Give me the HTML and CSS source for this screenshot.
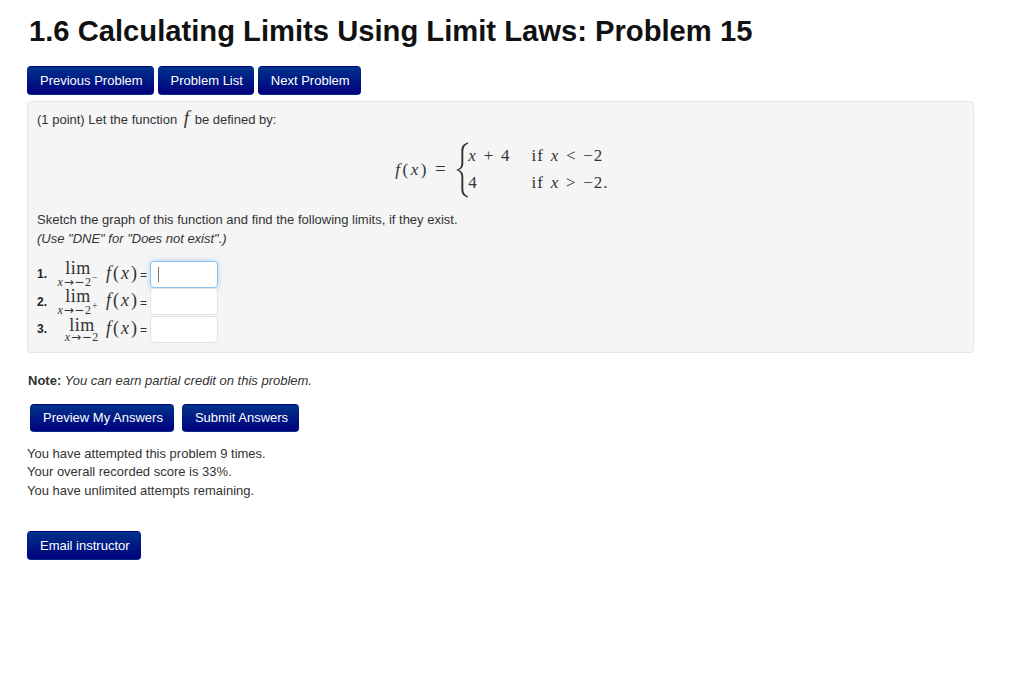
FILE: index.html
```html
<!DOCTYPE html>
<html lang="en">
<head>
<meta charset="utf-8">
<title>Problem 15</title>
<link rel="stylesheet" href="styles.css">
</head>
<body>
<h1 class="title">1.6 Calculating Limits Using Limit Laws: Problem 15</h1>
<nav class="nav">
  <a class="btn">Previous Problem</a>
  <a class="btn">Problem List</a>
  <a class="btn">Next Problem</a>
</nav>
<section class="well">
  <p class="intro">(1 point) Let the function <i class="m big">f</i> be defined by:</p>
  <div class="display">
    <span class="m eq-lhs"><i>f</i>(<i>x</i>)<span class="rel">=</span></span>
    <svg class="brace" width="12" height="56" viewBox="2 0 12.5 54" preserveAspectRatio="none"><path d="M14.5 0.6C9.5 1.6 7.6 4.5 7.6 8.5V20.5C7.6 23.5 6 26 2 27C6 28 7.6 30.5 7.6 33.5V45.5C7.6 49.5 9.5 52.4 14.5 53.4V52.4C11.5 51.4 9.6 49 9.6 45.5V33.5C9.6 30 8 28 5 27C8 26 9.6 24 9.6 20.5V8.5C9.6 5 11.5 2.6 14.5 1.6Z" fill="#333"/></svg>
    <div class="cases m">
      <span><i>x</i> + 4</span><span>if <i>x</i> &lt; −2</span>
      <span>4</span><span>if <i>x</i> &gt; −2.</span>
    </div>
  </div>
  <p class="sketch">Sketch the graph of this function and find the following limits, if they exist.<br><i>(Use "DNE" for "Does not exist".)</i></p>
  <ol class="answers">
    <li class="answer">
      <b class="num">1.</b>
      <span class="lim m"><span class="lim-word">lim</span><span class="lim-sub"><i>x</i><span class="arrow">→−</span>2<sup>−</sup></span></span>
      <span class="m fx"><i>f</i>(<i>x</i>)</span><span class="eq">=</span>
      <span class="input focus"><span class="caret"></span></span>
    </li>
    <li class="answer">
      <b class="num">2.</b>
      <span class="lim m"><span class="lim-word">lim</span><span class="lim-sub"><i>x</i><span class="arrow">→−</span>2<sup>+</sup></span></span>
      <span class="m fx"><i>f</i>(<i>x</i>)</span><span class="eq">=</span>
      <span class="input"></span>
    </li>
    <li class="answer">
      <b class="num">3.</b>
      <span class="lim m lim-c"><span class="lim-word">lim</span><span class="lim-sub"><i>x</i><span class="arrow">→−</span>2</span></span>
      <span class="m fx"><i>f</i>(<i>x</i>)</span><span class="eq">=</span>
      <span class="input"></span>
    </li>
  </ol>
</section>
<p class="note"><b>Note:</b> <i>You can earn partial credit on this problem.</i></p>
<div class="actions">
  <a class="btn short">Preview My Answers</a>
  <a class="btn short">Submit Answers</a>
</div>
<p class="status">You have attempted this problem 9 times.<br>Your overall recorded score is 33%.<br>You have unlimited attempts remaining.</p>
<a class="btn email">Email instructor</a>
</body>
</html>
```
FILE: styles.css
```css
* { box-sizing: border-box; }
html, body { margin: 0; background: #fff; }
body {
  padding: 0 50px 0 27px;
  height: 689px;
  overflow: hidden;
  font: 13px/18.57px "Liberation Sans", Arial, sans-serif;
  color: #333;
}
.title {
  margin: 0;
  padding: 15px 0 0 2px;
  font-size: 29.2px;
  line-height: 32px;
  font-weight: bold;
  color: #111;
}
.btn {
  display: inline-block;
  height: 29px;
  padding: 0 10px 0 12px;
  font-size: 13px;
  line-height: 27px;
  color: #fff;
  white-space: nowrap;
  background: linear-gradient(#00338a, #00007f);
  border: 1px solid #c6cbdf00;
  border-radius: 4px;
}
.short { height: 28px; line-height: 26px; }
.nav { display: flex; gap: 4px; margin-top: 19px; }
.well {
  margin-top: 6px;
  height: 252px;
  padding: 9px 9px 0;
  background: #f5f5f5;
  border: 1px solid #e6e6e6;
  border-radius: 4px;
}
.intro { margin: 0; }
.m { font-family: "Liberation Serif", "Times New Roman", serif; font-size: 17px; color: #333; letter-spacing: 1px; }
.big { font-size: 19px; line-height: 14px; padding: 0 2px 0 3px; letter-spacing: 0; }
.display {
  display: flex;
  justify-content: center;
  align-items: center;
  margin-top: 11px;
  height: 58px;
  padding-left: 3px;
}
.eq-lhs { width: 61px; flex: none; white-space: nowrap; letter-spacing: 2.5px; }
.rel { margin-left: 6px; font-size: 19px; letter-spacing: 0; }
.brace { flex: none; }
.cases {
  display: grid;
  grid-template-columns: auto auto;
  column-gap: 21px;
  row-gap: 5px;
  line-height: 22px;
  margin-left: 0;
  word-spacing: 1.5px;
}
.sketch { margin: 12.5px 0 0; }
.answers { list-style: none; margin: 12.5px 0 0; padding: 0; }
.answer { display: flex; align-items: center; height: 27.5px; }
.num { width: 18px; flex: none; color: #222; font-size: 12px; }
.lim { display: inline-flex; flex-direction: column; align-items: center; width: 46px; flex: none; line-height: 14px; }
.lim-c { padding-left: 8px; margin-top: 2px; }
.lim-word { font-size: 18px; line-height: 16px; letter-spacing: 0.5px; }
.lim-sub { font-size: 12px; line-height: 11px; margin-top: 1px; white-space: nowrap; letter-spacing: 1px; }
.lim-c .lim-sub { margin-top: -1px; }
.arrow { font-family: "DejaVu Sans", sans-serif; font-size: 12px; letter-spacing: 0.5px; }
.lim-sub sup { font-size: 10px; line-height: 0; }
.fx { font-size: 18px; margin-left: 5px; margin-top: -3px; width: 34px; flex: none; letter-spacing: 2px; white-space: nowrap; }
.eq { width: 7px; flex: none; font-size: 12px; margin-top: 2px; }
.input {
  display: block;
  flex: none;
  width: 68px;
  height: 27px;
  margin-left: 3px;
  background: #fff;
  border: 1px solid #e2e2e2;
  border-radius: 4px;
}
.focus {
  border-color: #8fc1ec;
  box-shadow: 0 0 5px rgba(82, 168, 236, .5);
  padding: 5px 0 0 7px;
}
.caret { display: block; width: 1px; height: 15px; background: #777; }
.note { margin: 19px 0 0 1px; }
.actions { display: flex; gap: 8px; margin: 13px 0 0 3px; }
.status { margin: 13px 0 0; }
.email { margin-top: 31px; }
```
